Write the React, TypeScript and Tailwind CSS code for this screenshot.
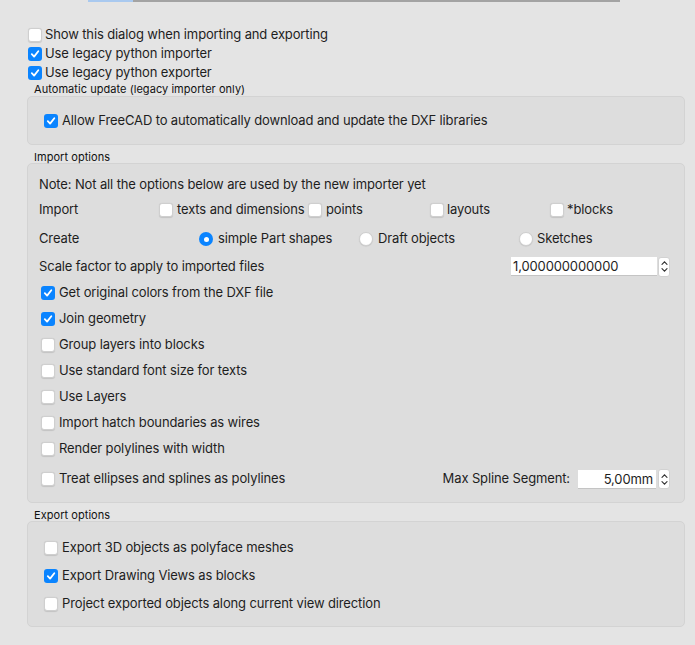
import React from 'react';

// --- SMALL CONTROLS ---
const Check: React.FC<{ on?: boolean }> = ({ on }) =>
  on ? (
    <span className="w-[14px] h-[14px] shrink-0 rounded-[3px] bg-[#0a84ff] flex items-center justify-center">
      <svg width="10" height="10" viewBox="0 0 10 10">
        <path d="M1.8 5.2 L4.1 7.6 L8.3 2.2" fill="none" stroke="white" strokeWidth="1.8" strokeLinecap="round" strokeLinejoin="round" />
      </svg>
    </span>
  ) : (
    <span className="w-[14px] h-[14px] shrink-0 rounded-[3px] bg-white border border-[#cfcfcf] shadow-[0_0.5px_1px_rgba(0,0,0,0.12)]" />
  );

const Radio: React.FC<{ on?: boolean }> = ({ on }) =>
  on ? (
    <span className="w-[14px] h-[14px] shrink-0 rounded-full bg-[#0a84ff] flex items-center justify-center">
      <span className="w-[5px] h-[5px] rounded-full bg-white" />
    </span>
  ) : (
    <span className="w-[14px] h-[14px] shrink-0 rounded-full bg-white border border-[#cfcfcf] shadow-[0_0.5px_1px_rgba(0,0,0,0.12)]" />
  );

const Spinner = () => (
  <span className="w-[12px] h-[20px] shrink-0 rounded-[3px] bg-white border border-[#d2d2d2] flex flex-col items-center justify-center gap-[3px]">
    <svg width="7" height="4" viewBox="0 0 7 4">
      <path d="M1 3.3 L3.5 0.8 L6 3.3" fill="none" stroke="#333" strokeWidth="1.1" strokeLinecap="round" />
    </svg>
    <svg width="7" height="4" viewBox="0 0 7 4">
      <path d="M1 0.7 L3.5 3.2 L6 0.7" fill="none" stroke="#333" strokeWidth="1.1" strokeLinecap="round" />
    </svg>
  </span>
);

const CheckRow: React.FC<{ on?: boolean; label: string; h: string; gap?: string }> = ({ on, label, h, gap = 'gap-[4px]' }) => (
  <div className={`flex items-center ${gap} ${h}`}>
    <Check on={on} />
    <span>{label}</span>
  </div>
);

const GroupTitle: React.FC<{ text: string; cls: string }> = ({ text, cls }) => (
  <div className={`pl-[34px] text-[11px] leading-[13px] tracking-[0.05px] text-[#111] ${cls}`}>{text}</div>
);

const Group: React.FC<{ cls: string; children: React.ReactNode }> = ({ cls, children }) => (
  <div className={`ml-[27px] w-[658px] rounded-[5px] bg-[#dddddd] border border-[#d3d3d3] ${cls}`}>{children}</div>
);

const IMPORT_ROWS = [
  { label: 'Get original colors from the DXF file', on: true },
  { label: 'Join geometry', on: true },
  { label: 'Group layers into blocks' },
  { label: 'Use standard font size for texts' },
  { label: 'Use Layers' },
  { label: 'Import hatch boundaries as wires' },
  { label: 'Render polylines with width' },
];

export default function App() {
  return (
    <div
      className="w-[695px] h-[645px] overflow-hidden bg-[#e4e4e4] text-[13px] tracking-[-0.13px] text-[#1e1e1e]"
      style={{ fontFamily: 'Inter, "Liberation Sans", sans-serif' }}
    >
      {/* tab strip edge */}
      <div className="ml-[88px] w-[532px] h-[2px] flex">
        <div className="w-[45px] bg-[#a9c9ef]" />
        <div className="flex-1 bg-[#a3a3a3]" />
      </div>

      <div className="pt-[23px] pl-[28px]">
        <CheckRow label="Show this dialog when importing and exporting" h="h-[19px]" gap="gap-[3px]" />
        <CheckRow on label="Use legacy python importer" h="h-[19px]" gap="gap-[3px]" />
        <CheckRow on label="Use legacy python exporter" h="h-[19px]" gap="gap-[3px]" />
      </div>

      <GroupTitle text="Automatic update (legacy importer only)" cls="h-[14px] pt-[1px]" />
      <Group cls="h-[49px] flex items-center pl-[16px]">
        <CheckRow on label="Allow FreeCAD to automatically download and update the DXF libraries" h="h-[20px]" />
      </Group>

      <GroupTitle text="Import options" cls="mt-[5px] h-[13px] pt-[1px]" />
      <Group cls="pt-[11px] pb-[6px] pl-[11px] pr-[14px]">
        <div className="h-[20px] flex items-center">Note: Not all the options below are used by the new importer yet</div>
        <div className="h-[30px] flex items-center">
          <span className="w-[120px]">Import</span>
          <div className="w-[149px] flex items-center gap-[4px]"><Check /><span>texts and dimensions</span></div>
          <div className="w-[122px] flex items-center gap-[4px]"><Check /><span>points</span></div>
          <div className="w-[120px] flex items-center gap-[3px]"><Check /><span>layouts</span></div>
          <div className="flex items-center gap-[3px]"><Check /><span>*blocks</span></div>
        </div>
        <div className="h-[28px] flex items-center">
          <span className="w-[160px]">Create</span>
          <div className="w-[160px] flex items-center gap-[5px]"><Radio on /><span>simple Part shapes</span></div>
          <div className="w-[160px] flex items-center gap-[5px]"><Radio /><span>Draft objects</span></div>
          <div className="flex items-center gap-[4px]"><Radio /><span>Sketches</span></div>
        </div>
        <div className="h-[27px] flex items-center justify-between">
          <span>Scale factor to apply to imported files</span>
          <div className="flex items-center gap-[1px]">
            <div className="w-[146px] h-[19px] bg-white border-b border-[#c4c4c4] pl-[2px] leading-[19px]">1,000000000000</div>
            <Spinner />
          </div>
        </div>
        <div className="pl-[2px]">
          {IMPORT_ROWS.map(r => (
            <CheckRow key={r.label} on={r.on} label={r.label} h="h-[26px]" />
          ))}
          <div className="h-[34px] flex items-center justify-between">
            <div className="flex items-center gap-[4px]"><Check /><span>Treat ellipses and splines as polylines</span></div>
            <div className="flex items-center">
              <span className="mr-[8px]">Max Spline Segment:</span>
              <div className="w-[78px] h-[19px] bg-white border-b border-[#c4c4c4] pr-[3px] text-right leading-[19px]">5,00mm</div>
              <span className="ml-[2px]"><Spinner /></span>
            </div>
          </div>
        </div>
      </Group>

      <GroupTitle text="Export options" cls="mt-[5px] h-[13px] pt-[1px]" />
      <Group cls="pt-[12px] pb-[8px] pl-[16px]">
        <CheckRow label="Export 3D objects as polyface meshes" h="h-[28px]" />
        <CheckRow on label="Export Drawing Views as blocks" h="h-[28px]" />
        <CheckRow label="Project exported objects along current view direction" h="h-[28px]" />
      </Group>
    </div>
  );
}
